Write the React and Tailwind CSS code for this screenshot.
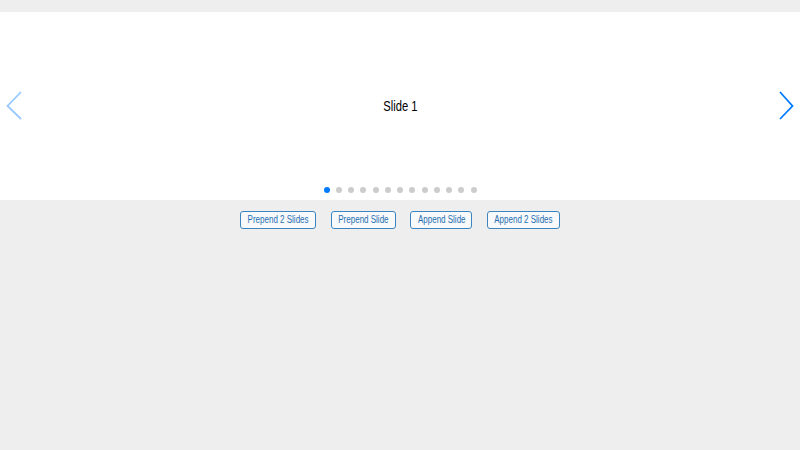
import React from "react";

const bullets = Array.from({ length: 13 });

const buttons = [
  { label: "Prepend 2 Slides", w: "w-[76px]" },
  { label: "Prepend Slide", w: "w-[65px]" },
  { label: "Append Slide", w: "w-[62px]" },
  { label: "Append 2 Slides", w: "w-[73px]" },
];

export default function App() {
  return (
    <div
      className="min-h-[450px] bg-[#eeeeee] pt-[12px]"
      style={{ fontFamily: '"Liberation Sans", Arial, sans-serif' }}
    >
      <div className="relative h-[188px] bg-white flex items-center justify-center">
        {/* the shot is squeezed sideways, so the text is too */}
        <span className="inline-block text-[14px] text-black scale-x-[0.8]">Slide 1</span>

        {/* prev arrow (disabled) */}
        <svg
          className="absolute left-0 top-[78px] opacity-40"
          width="30"
          height="32"
          viewBox="0 0 30 32"
        >
          <polyline
            points="21,2 7.5,16 21,29"
            fill="none"
            stroke="#007aff"
            strokeWidth="1.8"
          />
        </svg>

        {/* next arrow */}
        <svg
          className="absolute right-0 top-[78px]"
          width="30"
          height="32"
          viewBox="0 0 30 32"
        >
          <polyline
            points="10,2 22.5,16 10,29"
            fill="none"
            stroke="#007aff"
            strokeWidth="1.8"
          />
        </svg>

        <div className="absolute bottom-[7px] left-0 right-0 flex justify-center gap-[6.25px]">
          {bullets.map((_, i) => (
            <span
              key={i}
              className={
                "block w-[6px] h-[6px] rounded-full " +
                (i === 0 ? "bg-[#007aff]" : "bg-[#cccccc]")
              }
            />
          ))}
        </div>
      </div>

      <div className="flex justify-center gap-[14.5px] mt-[11px]">
        {buttons.map(({ label, w }) => (
          <button
            key={label}
            className={
              "h-[18px] flex items-center justify-center text-[10px] leading-none text-[#1f6fb2] bg-[#f7f9fb] border border-[#3d85c0] rounded-[3px] " +
              w
            }
          >
            <span className="inline-block whitespace-nowrap scale-x-[0.8]">{label}</span>
          </button>
        ))}
      </div>
    </div>
  );
}
